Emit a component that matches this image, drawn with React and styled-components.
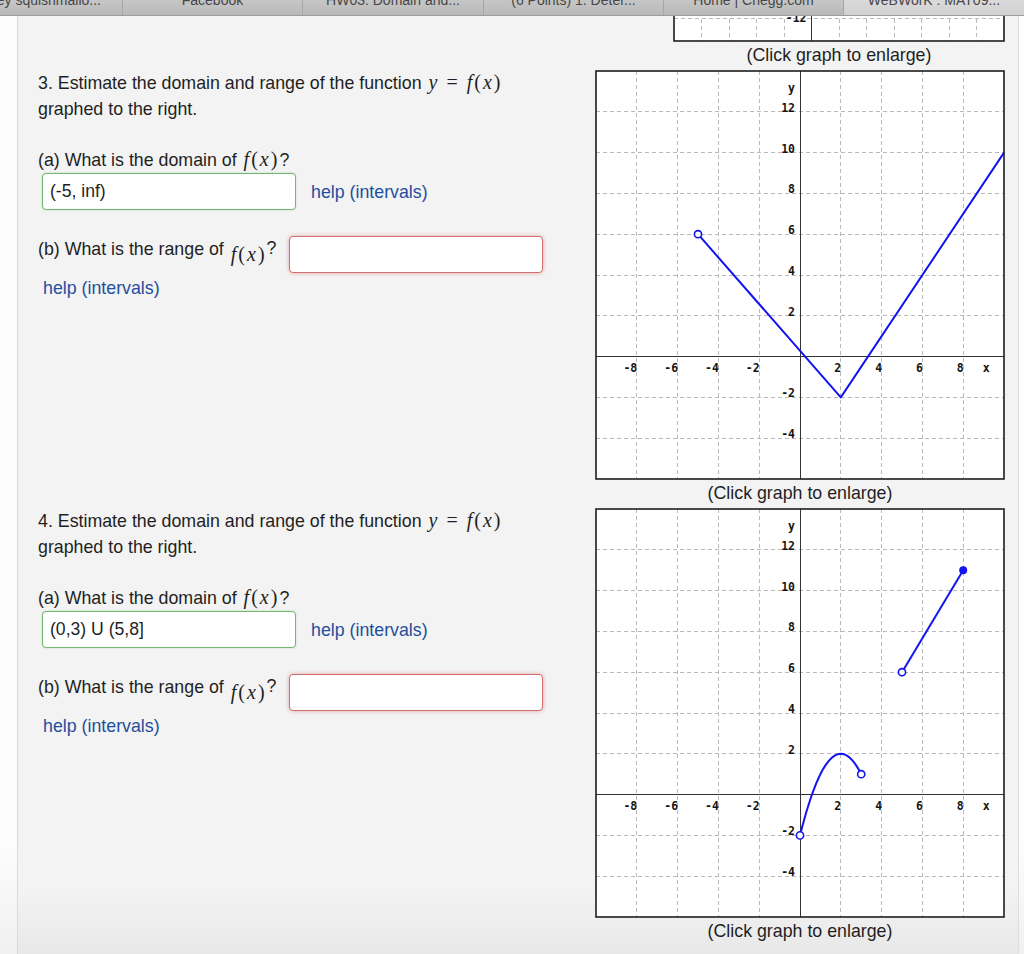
import React from 'react';
import styled, { createGlobalStyle } from 'styled-components';

const GlobalStyle = createGlobalStyle`
  html, body {
    margin: 0;
    padding: 0;
  }
  body {
    background: #fcfcfc;
    font-family: "Liberation Sans", Arial, sans-serif;
    color: #1f1f1f;
  }
`;

const Window = styled.div`
  height: 954px;
  display: flex;
  flex-direction: column;
  overflow: hidden;
`;

const TabBar = styled.div`
  display: flex;
  flex: 0 0 15px;
  border-bottom: 1px solid #9c9c9c;
  background: linear-gradient(#c6c6c6, #b9b9b9);
  overflow: hidden;
`;

const Tab = styled.div`
  flex: ${p => (p.$width ? `0 0 ${p.$width}px` : '1 1 auto')};
  display: flex;
  justify-content: ${p => p.$align || 'center'};
  padding-right: ${p => p.$padRight || 0}px;
  border-right: ${p => (p.$active ? 'none' : '1px solid #a6a6a6')};
  background: ${p => (p.$active ? 'linear-gradient(#dadada, #d1d1d1)' : 'transparent')};
  box-sizing: border-box;
  overflow: hidden;
`;

const TabTitle = styled.span`
  font-size: 14px;
  line-height: 14px;
  margin-top: -7px;
  color: #474747;
  white-space: nowrap;
`;

const Viewport = styled.div`
  flex: 1;
  display: flex;
  min-height: 0;
`;

const Gutter = styled.div`
  flex: 0 0 ${p => p.$width}px;
  background: linear-gradient(#fdfdfd 0, #fdfdfd 88%, #f0f0f0 100%);
`;

const Panel = styled.main`
  flex: 1;
  display: flex;
  flex-direction: column;
  gap: 4px;
  padding: 0 13px 0 20px;
  background: linear-gradient(#f3f3f3 0, #f3f3f3 93%, #e8e8e8 100%);
  border-left: 1px solid #dadada;
  border-right: 1px solid #dedede;
`;

const ProblemRow = styled.section`
  display: flex;
  justify-content: space-between;
  align-items: flex-start;
`;

const Problem = styled.div`
  flex: 1;
  font-size: 17.8px;
`;

const Statement = styled.p`
  margin: 0;
  line-height: 26px;
`;

const Question = styled.p`
  margin: 25px 0 0;
  line-height: 26px;
  white-space: nowrap;
`;

const AnswerRow = styled.div`
  display: flex;
  align-items: center;
  gap: 15px;
  margin-left: 4px;
`;

const RangeRow = styled.div`
  display: flex;
  align-items: flex-start;
  gap: 13px;
  margin-top: 26px;

  ${Question} {
    margin: 0;
  }
`;

const AnswerInput = styled.input`
  box-sizing: border-box;
  width: 254px;
  height: 37px;
  padding: 0 7px;
  font: 17.6px "Liberation Sans", Arial, sans-serif;
  color: #1f1f1f;
  background: #fff;
  border-radius: 4px;
  outline: none;
  border: 1px solid ${p => (p.$status === 'correct' ? '#72b872' : '#d26d6d')};
  box-shadow: 0 0 ${p => (p.$status === 'correct' ? '2px rgba(80, 160, 80, 0.35)' : '4px rgba(210, 80, 80, 0.45)')};
`;

const HelpLink = styled.a`
  display: ${p => (p.$block ? 'block' : 'inline')};
  margin: ${p => (p.$block ? '2px 0 0 5px' : '0')};
  line-height: 26px;
  color: #1f4f9e;
  text-decoration: none;
  cursor: pointer;
`;

const MathExpr = styled.span`
  font-family: "Liberation Serif", "Times New Roman", serif;
  font-size: 20px;
  line-height: 0;
  letter-spacing: 2px;
  vertical-align: ${p => (p.$drop ? '-6px' : 'baseline')};
  margin-left: 2px;
`;

const MathVar = styled.i`
  font-style: italic;
`;

const MathOp = styled.span`
  margin: 0 ${p => p.$space || 0}px;
`;

const Mark = styled.span`
  line-height: 0;
  vertical-align: 1px;
`;

const Figure = styled.figure`
  margin: 0;
  display: flex;
  flex-direction: column;
  align-items: center;
`;

const GraphClip = styled.div`
  height: ${p => p.$visible}px;
  overflow: hidden;
  display: flex;
  flex-direction: column;
  justify-content: flex-end;
`;

const GraphSvg = styled.svg`
  display: block;
  flex-shrink: 0;
  cursor: pointer;
`;

const Caption = styled.figcaption`
  margin-top: 2px;
  font-size: 17.8px;
  line-height: 22px;
  color: #1f1f1f;
  cursor: pointer;
`;

const BLUE = '#1414f2';
const LABEL_FONT = '"DejaVu Sans Mono", "Liberation Mono", monospace';

function Graph({ x0, x1, y0, y1, unit, xLabel = 9.3, yLabelDy = 0, children }) {
  const w = (x1 - x0) * unit + 2;
  const h = (y1 - y0) * unit + 2;
  const sx = x => 1 + (x - x0) * unit;
  const sy = y => 1 + (y1 - y) * unit;

  const xs = [];
  for (let x = Math.ceil(x0 / 2) * 2; x < x1; x += 2) if (x > x0 && x !== 0) xs.push(x);
  const ys = [];
  for (let y = Math.ceil(y0 / 2) * 2; y < y1; y += 2) if (y > y0 && y !== 0) ys.push(y);

  return (
    <GraphSvg width={w} height={h} viewBox={`0 0 ${w} ${h}`}>
      <rect x="0" y="0" width={w} height={h} fill="#fff" />
      <g stroke="#b9b9b9" strokeWidth="1" strokeDasharray="4 3" shapeRendering="crispEdges">
        {xs.map(x => <line key={`v${x}`} x1={sx(x)} y1={1} x2={sx(x)} y2={h - 1} />)}
        {ys.map(y => <line key={`h${y}`} x1={1} y1={sy(y)} x2={w - 1} y2={sy(y)} />)}
      </g>
      <g stroke="#333" strokeWidth="1" shapeRendering="crispEdges">
        <line x1={sx(0)} y1={1} x2={sx(0)} y2={h - 1} />
        <line x1={1} y1={sy(0)} x2={w - 1} y2={sy(0)} />
      </g>
      <g fontFamily={LABEL_FONT} fontSize="11.5" fontWeight="bold" fill="#141414">
        {xs.map(x => (
          <text key={`xl${x}`} x={sx(x) + 0.5} y={sy(0) + 15} textAnchor="end">{x}</text>
        ))}
        <text x={sx(xLabel)} y={sy(0) + 15} textAnchor="end">x</text>
        {ys.map(y => (
          <text key={`yl${y}`} x={sx(0) - 5} y={sy(y) + yLabelDy} textAnchor="end">{y}</text>
        ))}
        <text x={sx(0) - 5} y={sy(y1 - 1) + 1} textAnchor="end">y</text>
      </g>
      {children && children({ sx, sy })}
      <rect x="1" y="1" width={w - 2} height={h - 2} fill="none" stroke="#1c1c1c" strokeWidth="1.6" />
    </GraphSvg>
  );
}

const OpenDot = ({ cx, cy }) => <circle cx={cx} cy={cy} r="3.6" fill="#fff" stroke={BLUE} strokeWidth="1.6" />;
const FilledDot = ({ cx, cy }) => <circle cx={cx} cy={cy} r="4" fill={BLUE} />;

function parabola(sx, sy) {
  const pts = [];
  for (let i = 0; i <= 30; i++) {
    const x = (3 * i) / 30;
    pts.push(`${sx(x).toFixed(1)},${sy(2 - (x - 2) * (x - 2)).toFixed(1)}`);
  }
  return pts.join(' ');
}

const FX = () => (
  <>
    <MathVar>f</MathVar>(<MathVar>x</MathVar>)
  </>
);

const GRAPH = { x0: -10, x1: 10, y0: -6, y1: 14, unit: 20.4 };

const tabs = [
  { title: 'ey squishmallo...', width: 123, align: 'flex-end', padRight: 21 },
  { title: 'Facebook', width: 180 },
  { title: 'HW03: Domain and...', width: 181 },
  { title: '(6 Points) 1. Deter...', width: 180 },
  { title: 'Home | Chegg.com', width: 180 },
  { title: 'WeBWorK : MAT09...', active: true },
];

function ProblemText({ number, domainAnswer }) {
  return (
    <Problem>
      <Statement>
        {number}. Estimate the domain and range of the function{' '}
        <MathExpr>
          <MathVar>y</MathVar>
          <MathOp $space={7}>=</MathOp>
          <FX />
        </MathExpr>
        <br />
        graphed to the right.
      </Statement>
      <Question>
        (a) What is the domain of <MathExpr><FX /></MathExpr>?
      </Question>
      <AnswerRow>
        <AnswerInput $status="correct" defaultValue={domainAnswer} readOnly />
        <HelpLink>help (intervals)</HelpLink>
      </AnswerRow>
      <RangeRow>
        <Question>
          (b) What is the range of <MathExpr $drop><FX /></MathExpr>
          <Mark>?</Mark>
        </Question>
        <AnswerInput $status="incorrect" defaultValue="" />
      </RangeRow>
      <HelpLink $block>help (intervals)</HelpLink>
    </Problem>
  );
}

export default function App() {
  return (
    <Window>
      <GlobalStyle />
      <TabBar>
        {tabs.map(t => (
          <Tab key={t.title} $width={t.width} $align={t.align} $padRight={t.padRight} $active={t.active}>
            <TabTitle>{t.title}</TabTitle>
          </Tab>
        ))}
      </TabBar>
      <Viewport>
        <Gutter $width={17} />
        <Panel>
          <ProblemRow>
            <Problem />
            <Figure>
              <GraphClip $visible={26}>
                <Graph x0={-10} x1={14} y0={-13.67} y1={10.33} unit={13.75} yLabelDy={4} />
              </GraphClip>
              <Caption>(Click graph to enlarge)</Caption>
            </Figure>
          </ProblemRow>

          <ProblemRow>
            <ProblemText number={3} domainAnswer="(-5, inf)" />
            <Figure>
              <Graph {...GRAPH}>
                {({ sx, sy }) => (
                  <g>
                    <polyline
                      points={`${sx(-5)},${sy(6)} ${sx(2)},${sy(-2)} ${sx(10)},${sy(10)}`}
                      fill="none"
                      stroke={BLUE}
                      strokeWidth="2"
                      strokeLinejoin="round"
                    />
                    <OpenDot cx={sx(-5)} cy={sy(6)} />
                  </g>
                )}
              </Graph>
              <Caption>(Click graph to enlarge)</Caption>
            </Figure>
          </ProblemRow>

          <ProblemRow>
            <ProblemText number={4} domainAnswer="(0,3) U (5,8]" />
            <Figure>
              <Graph {...GRAPH}>
                {({ sx, sy }) => (
                  <g>
                    <polyline points={parabola(sx, sy)} fill="none" stroke={BLUE} strokeWidth="2" strokeLinejoin="round" />
                    <OpenDot cx={sx(0)} cy={sy(-2)} />
                    <OpenDot cx={sx(3)} cy={sy(1)} />
                    <line x1={sx(5)} y1={sy(6)} x2={sx(8)} y2={sy(11)} stroke={BLUE} strokeWidth="2" />
                    <OpenDot cx={sx(5)} cy={sy(6)} />
                    <FilledDot cx={sx(8)} cy={sy(11)} />
                  </g>
                )}
              </Graph>
              <Caption>(Click graph to enlarge)</Caption>
            </Figure>
          </ProblemRow>
        </Panel>
        <Gutter $width={5} />
      </Viewport>
    </Window>
  );
}
